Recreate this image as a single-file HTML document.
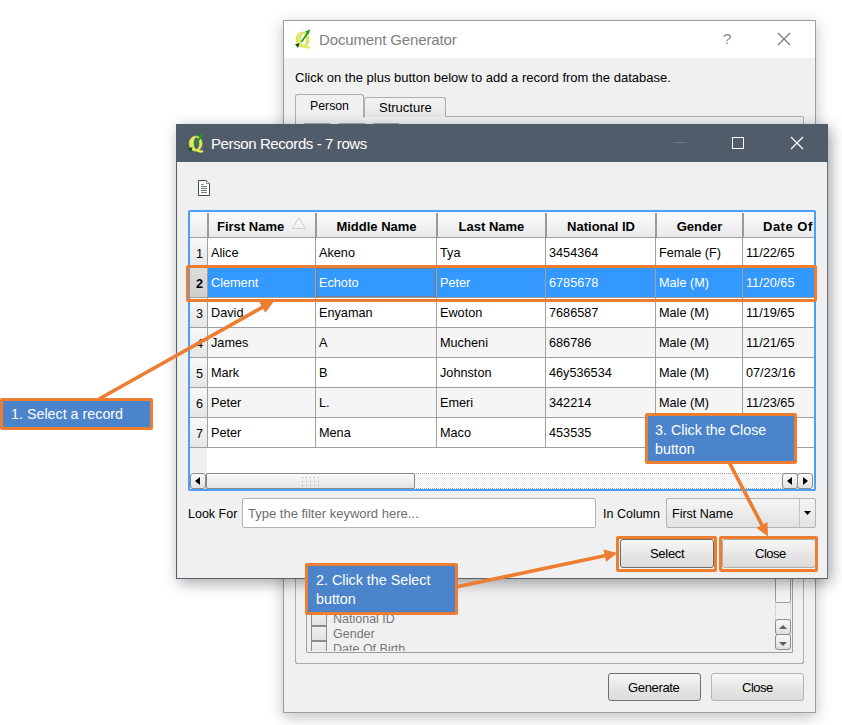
<!DOCTYPE html><html><head><meta charset="utf-8"><style>
*{box-sizing:border-box;margin:0;padding:0}
html,body{width:842px;height:725px;overflow:hidden;background:#fff;font-family:"Liberation Sans",sans-serif;position:relative}
div,span{position:absolute}
.t{white-space:nowrap;line-height:1}
.btn{border:1px solid #8a8a8a;border-radius:3px;background:linear-gradient(#f7f7f7,#e4e4e4 60%,#dcdcdc);}
.ann{background:#4b84ca;border:3px solid #ed7d31;border-radius:2px}
.anntx{color:#fff;font-size:14.3px;line-height:19px;white-space:nowrap}
.orect{border:3px solid #ed7d31;border-radius:2px}
</style></head><body>
<div style="left:283px;top:20px;width:533px;height:693px;border:1px solid #9c9c9c;background:#f0f0f0;box-shadow:0 4px 14px rgba(0,0,0,0.25)"></div>
<div style="left:284px;top:21px;width:531px;height:37px;background:#fff"></div>
<svg style="position:absolute;left:294px;top:28px" width="18" height="22" viewBox="0 0 18 22"><path fill-rule="evenodd" fill="#e2ec62" stroke="#c4cf3e" stroke-width="0.6" d="M2.1 11.6 a6.55 7.6 0 1 0 13.1 0 a6.55 7.6 0 1 0 -13.1 0 Z M6.6 11.3 a2.9 6.1 0 1 0 5.8 0 a2.9 6.1 0 1 0 -5.8 0 Z"/><path d="M9.5 17.5 Q12 20.5 16 19" fill="none" stroke="#e2ec62" stroke-width="2.4"/><path d="M7.6 13.8 L13.8 4.8" stroke="#1f9a1f" stroke-width="1.8"/><path d="M16.2 1.2 L11.2 3.6 L14.6 6.4 Z" fill="#1c9a1c"/><path d="M1 16.6 L5.6 15 L4 20 Z" fill="#15501a"/></svg>
<span class="t" style="left:319px;top:32px;font-size:15px;letter-spacing:-0.14px;color:#808080">Document Generator</span>
<span class="t" style="left:723px;top:31px;font-size:15px;color:#8a8a8a">?</span>
<svg style="position:absolute;left:777px;top:32px" width="14" height="14"><path d="M1 1L13 13M13 1L1 13" stroke="#777" stroke-width="1.2"/></svg>
<span class="t" style="left:295px;top:71px;font-size:13px;color:#000">Click on the plus button below to add a record from the database.</span>
<div style="left:295px;top:116px;width:509px;height:548px;border:1px solid #adadad;border-radius:2px;background:#f0f0f0"></div>
<div style="left:364px;top:97px;width:82px;height:20px;border:1px solid #adadad;border-bottom:none;border-radius:3px 3px 0 0;background:linear-gradient(#f4f4f4,#e6e6e6)"></div>
<div style="left:295px;top:94px;width:69px;height:24px;border:1px solid #adadad;border-bottom:none;border-radius:3px 3px 0 0;background:#f0f0f0"></div>
<span class="t" style="left:310px;top:100px;font-size:12.3px;color:#000">Person</span>
<span class="t" style="left:379px;top:101px;font-size:13px;color:#000">Structure</span>
<div style="left:303px;top:123px;width:28px;height:6px;border:1px solid #a8a8a8;border-radius:2px;background:#e4e4e4"></div>
<div style="left:338px;top:123px;width:28px;height:6px;border:1px solid #a8a8a8;border-radius:2px;background:#e4e4e4"></div>
<div style="left:372px;top:123px;width:28px;height:6px;border:1px solid #a8a8a8;border-radius:2px;background:#e4e4e4"></div>
<div style="left:306px;top:560px;width:487px;height:93px;border:1px solid #9d9d9d;border-radius:2px;background:#f0f0f0"></div>
<div style="left:311px;top:596px;width:16px;height:15px;border:1px solid #8d8d8d;background:linear-gradient(#f0f0f0,#e2e2e2)"></div>
<span class="t" style="left:333px;top:598px;font-size:12.5px;color:#777">Structure</span>
<div style="left:311px;top:611px;width:16px;height:15px;border:1px solid #8d8d8d;background:linear-gradient(#f0f0f0,#e2e2e2)"></div>
<span class="t" style="left:333px;top:613px;font-size:12.5px;color:#777">National ID</span>
<div style="left:311px;top:626px;width:16px;height:15px;border:1px solid #8d8d8d;background:linear-gradient(#f0f0f0,#e2e2e2)"></div>
<span class="t" style="left:333px;top:628px;font-size:12.5px;color:#777">Gender</span>
<div style="left:311px;top:641px;width:16px;height:15px;border:1px solid #8d8d8d;background:linear-gradient(#f0f0f0,#e2e2e2)"></div>
<span class="t" style="left:333px;top:643px;font-size:12.5px;color:#777">Date Of Birth</span>
<div style="left:307px;top:651px;width:485px;height:13px;background:#f0f0f0"></div>
<div style="left:306px;top:651px;width:487px;height:2px;border:1px solid #9d9d9d;border-top:none;border-radius:0 0 2px 2px"></div>
<div style="left:295px;top:560px;width:509px;height:104px;border:1px solid #adadad;border-top:none;border-radius:0 0 3px 3px"></div>
<div style="left:775px;top:561px;width:16px;height:90px;background:#f0f0f0"></div>
<div style="left:775px;top:570px;width:16px;height:33px;border:1px solid #9a9a9a;border-radius:2px;background:#f4f4f4"></div>
<div style="left:775px;top:603px;width:16px;height:17px;border-left:1px dotted #bbb;border-right:1px dotted #bbb"></div>
<div style="left:775px;top:619px;width:16px;height:16px;border:1px solid #8c8c8c;border-radius:3px;background:linear-gradient(#f8f8f8,#e0e0e0)"></div>
<div style="left:775px;top:634px;width:16px;height:16px;border:1px solid #8c8c8c;border-radius:3px;background:linear-gradient(#f8f8f8,#e0e0e0)"></div>
<svg style="position:absolute;left:775px;top:619px" width="16" height="32"><path d="M4 10H12L8 6Z M4 23H12L8 27Z" fill="#606060"/></svg>
<div class="btn" style="left:608px;top:673px;width:93px;height:28px;border-color:#6f6f6f"></div>
<span class="t" style="left:628px;top:681px;font-size:13px;letter-spacing:-0.35px">Generate</span>
<div class="btn" style="left:711px;top:673px;width:93px;height:28px;border-color:#b4b4b4"></div>
<span class="t" style="left:742px;top:681px;font-size:13px;letter-spacing:-0.5px">Close</span>
<div style="left:176px;top:124px;width:652px;height:455px;border:1px solid;border-color:#515c6b #66707c #58626e #56606d;background:#f0f0f0;box-shadow:3px 4px 14px rgba(0,0,0,0.36)"></div>
<div style="left:176px;top:124px;width:652px;height:38px;background:#515c6b"></div>
<svg style="position:absolute;left:187px;top:132px" width="18" height="22" viewBox="0 0 18 22"><path fill-rule="evenodd" fill="#e2ec62" stroke="#c4cf3e" stroke-width="0.6" d="M2.1 11.6 a6.55 7.6 0 1 0 13.1 0 a6.55 7.6 0 1 0 -13.1 0 Z M6.6 11.3 a2.9 6.1 0 1 0 5.8 0 a2.9 6.1 0 1 0 -5.8 0 Z"/><path d="M9.5 17.5 Q12 20.5 16 19" fill="none" stroke="#e2ec62" stroke-width="2.4"/><path d="M7.6 13.8 L13.8 4.8" stroke="#1f9a1f" stroke-width="1.8"/><path d="M16.2 1.2 L11.2 3.6 L14.6 6.4 Z" fill="#1c9a1c"/><path d="M1 16.6 L5.6 15 L4 20 Z" fill="#15501a"/></svg>
<span class="t" style="left:211px;top:136px;font-size:15px;letter-spacing:-0.4px;color:#fff">Person Records - 7 rows</span>
<div style="left:674px;top:142px;width:12px;height:1px;background:#6d7682"></div>
<div style="left:732px;top:137px;width:12px;height:12px;border:1px solid #fff"></div>
<svg style="position:absolute;left:790px;top:136px" width="14" height="14"><path d="M1 1L13 13M13 1L1 13" stroke="#fff" stroke-width="1.3"/></svg>
<svg style="position:absolute;left:196px;top:178px" width="16" height="20"><path d="M2.5 2.5H10.5L13.5 5.5V17.5H2.5Z" fill="#fff" stroke="#3f4a55"/><path d="M10.5 2.5V5.5H13.5" fill="#e4e4e4" stroke="#8a9096"/><path d="M5 6.5H7.5M5 8.5H11M5 10.5H11M5 12.5H11M5 14.5H11" stroke="#6f7780"/></svg>
<div style="left:188px;top:210px;width:628px;height:281px;border:2px solid #4a9ffa;border-radius:2px;background:#fff"></div>
<div style="left:190px;top:212px;width:624px;height:277px;overflow:hidden">
<div style="left:0;top:0;width:624px;height:26px;background:linear-gradient(#fbfbfb,#e9e9e9)"></div>
<div style="left:0;top:25px;width:624px;height:1px;background:#a0a0a0"></div>
<div style="left:0;top:26px;width:17px;height:250px;background:#f0f0f0"></div>
<div style="left:17px;top:1px;width:2px;height:25px;background:#9a9a9a"></div>
<div style="left:125px;top:1px;width:2px;height:25px;background:#9a9a9a"></div>
<div style="left:246px;top:1px;width:2px;height:25px;background:#9a9a9a"></div>
<div style="left:355px;top:1px;width:2px;height:25px;background:#9a9a9a"></div>
<div style="left:465px;top:1px;width:2px;height:25px;background:#9a9a9a"></div>
<div style="left:552px;top:1px;width:2px;height:25px;background:#9a9a9a"></div>
<span class="t" style="left:27px;top:8px;font-size:13px;font-weight:bold;color:#000">First Name</span>
<svg style="position:absolute;left:101px;top:4px" width="16" height="14"><path d="M1.5 12.5 L8 1.5 L14.5 12.5 Z" fill="none" stroke="#cfcfcf"/></svg>
<span class="t" style="left:146.4px;top:8px;font-size:13px;font-weight:bold;color:#000">Middle Name</span>
<span class="t" style="left:268.6px;top:8px;font-size:13px;font-weight:bold;color:#000">Last Name</span>
<span class="t" style="left:377.1px;top:8px;font-size:13px;font-weight:bold;color:#000">National ID</span>
<span class="t" style="left:486.7px;top:8px;font-size:13px;font-weight:bold;color:#000">Gender</span>
<span class="t" style="left:573px;top:8px;font-size:13px;font-weight:bold;color:#000;letter-spacing:0.5px">Date Of</span>
<div style="left:18px;top:26px;width:606px;height:29px;background:#ffffff"></div>
<div style="left:0;top:26px;width:17px;height:29px;background:linear-gradient(#f8f8f8,#e6e6e6)"></div>
<span class="t" style="left:6px;top:36px;font-size:12.7px;color:#000;">1</span>
<div style="left:0;top:55px;width:624px;height:1px;background:#a0a0a0"></div>
<span class="t" style="left:21px;top:35px;font-size:12.7px;color:#000">Alice</span>
<span class="t" style="left:129px;top:35px;font-size:12.7px;color:#000">Akeno</span>
<span class="t" style="left:250px;top:35px;font-size:12.7px;color:#000">Tya</span>
<span class="t" style="left:359px;top:35px;font-size:12.7px;color:#000">3454364</span>
<span class="t" style="left:469px;top:35px;font-size:12.7px;color:#000">Female (F)</span>
<span class="t" style="left:556px;top:35px;font-size:12.7px;color:#000">11/22/65</span>
<div style="left:18px;top:56px;width:606px;height:29px;background:#3399ff"></div>
<div style="left:0;top:56px;width:17px;height:29px;background:linear-gradient(#dcdcdc,#cfcfcf)"></div>
<span class="t" style="left:6px;top:66px;font-size:12.7px;color:#000;font-weight:bold">2</span>
<div style="left:0;top:85px;width:624px;height:1px;background:#a0a0a0"></div>
<span class="t" style="left:21px;top:65px;font-size:12.7px;color:#fff">Clement</span>
<span class="t" style="left:129px;top:65px;font-size:12.7px;color:#fff">Echoto</span>
<span class="t" style="left:250px;top:65px;font-size:12.7px;color:#fff">Peter</span>
<span class="t" style="left:359px;top:65px;font-size:12.7px;color:#fff">6785678</span>
<span class="t" style="left:469px;top:65px;font-size:12.7px;color:#fff">Male (M)</span>
<span class="t" style="left:556px;top:65px;font-size:12.7px;color:#fff">11/20/65</span>
<div style="left:18px;top:86px;width:606px;height:29px;background:#ffffff"></div>
<div style="left:0;top:86px;width:17px;height:29px;background:linear-gradient(#f8f8f8,#e6e6e6)"></div>
<span class="t" style="left:6px;top:96px;font-size:12.7px;color:#000;">3</span>
<div style="left:0;top:115px;width:624px;height:1px;background:#a0a0a0"></div>
<span class="t" style="left:21px;top:95px;font-size:12.7px;color:#000">David</span>
<span class="t" style="left:129px;top:95px;font-size:12.7px;color:#000">Enyaman</span>
<span class="t" style="left:250px;top:95px;font-size:12.7px;color:#000">Ewoton</span>
<span class="t" style="left:359px;top:95px;font-size:12.7px;color:#000">7686587</span>
<span class="t" style="left:469px;top:95px;font-size:12.7px;color:#000">Male (M)</span>
<span class="t" style="left:556px;top:95px;font-size:12.7px;color:#000">11/19/65</span>
<div style="left:18px;top:116px;width:606px;height:29px;background:#f5f5f5"></div>
<div style="left:0;top:116px;width:17px;height:29px;background:linear-gradient(#f8f8f8,#e6e6e6)"></div>
<span class="t" style="left:6px;top:126px;font-size:12.7px;color:#000;">4</span>
<div style="left:0;top:145px;width:624px;height:1px;background:#a0a0a0"></div>
<span class="t" style="left:21px;top:125px;font-size:12.7px;color:#000">James</span>
<span class="t" style="left:129px;top:125px;font-size:12.7px;color:#000">A</span>
<span class="t" style="left:250px;top:125px;font-size:12.7px;color:#000">Mucheni</span>
<span class="t" style="left:359px;top:125px;font-size:12.7px;color:#000">686786</span>
<span class="t" style="left:469px;top:125px;font-size:12.7px;color:#000">Male (M)</span>
<span class="t" style="left:556px;top:125px;font-size:12.7px;color:#000">11/21/65</span>
<div style="left:18px;top:146px;width:606px;height:29px;background:#ffffff"></div>
<div style="left:0;top:146px;width:17px;height:29px;background:linear-gradient(#f8f8f8,#e6e6e6)"></div>
<span class="t" style="left:6px;top:156px;font-size:12.7px;color:#000;">5</span>
<div style="left:0;top:175px;width:624px;height:1px;background:#a0a0a0"></div>
<span class="t" style="left:21px;top:155px;font-size:12.7px;color:#000">Mark</span>
<span class="t" style="left:129px;top:155px;font-size:12.7px;color:#000">B</span>
<span class="t" style="left:250px;top:155px;font-size:12.7px;color:#000">Johnston</span>
<span class="t" style="left:359px;top:155px;font-size:12.7px;color:#000">46y536534</span>
<span class="t" style="left:469px;top:155px;font-size:12.7px;color:#000">Male (M)</span>
<span class="t" style="left:556px;top:155px;font-size:12.7px;color:#000">07/23/16</span>
<div style="left:18px;top:176px;width:606px;height:29px;background:#f5f5f5"></div>
<div style="left:0;top:176px;width:17px;height:29px;background:linear-gradient(#f8f8f8,#e6e6e6)"></div>
<span class="t" style="left:6px;top:186px;font-size:12.7px;color:#000;">6</span>
<div style="left:0;top:205px;width:624px;height:1px;background:#a0a0a0"></div>
<span class="t" style="left:21px;top:185px;font-size:12.7px;color:#000">Peter</span>
<span class="t" style="left:129px;top:185px;font-size:12.7px;color:#000">L.</span>
<span class="t" style="left:250px;top:185px;font-size:12.7px;color:#000">Emeri</span>
<span class="t" style="left:359px;top:185px;font-size:12.7px;color:#000">342214</span>
<span class="t" style="left:469px;top:185px;font-size:12.7px;color:#000">Male (M)</span>
<span class="t" style="left:556px;top:185px;font-size:12.7px;color:#000">11/23/65</span>
<div style="left:18px;top:206px;width:606px;height:29px;background:#ffffff"></div>
<div style="left:0;top:206px;width:17px;height:29px;background:linear-gradient(#f8f8f8,#e6e6e6)"></div>
<span class="t" style="left:6px;top:216px;font-size:12.7px;color:#000;">7</span>
<div style="left:0;top:235px;width:624px;height:1px;background:#a0a0a0"></div>
<span class="t" style="left:21px;top:215px;font-size:12.7px;color:#000">Peter</span>
<span class="t" style="left:129px;top:215px;font-size:12.7px;color:#000">Mena</span>
<span class="t" style="left:250px;top:215px;font-size:12.7px;color:#000">Maco</span>
<span class="t" style="left:359px;top:215px;font-size:12.7px;color:#000">453535</span>
<span class="t" style="left:469px;top:215px;font-size:12.7px;color:#000">Male (M)</span>
<span class="t" style="left:556px;top:215px;font-size:12.7px;color:#000">11/23/65</span>
<div style="left:17px;top:26px;width:1px;height:210px;background:#a0a0a0"></div>
<div style="left:125px;top:26px;width:1px;height:210px;background:#a0a0a0"></div>
<div style="left:246px;top:26px;width:1px;height:210px;background:#a0a0a0"></div>
<div style="left:355px;top:26px;width:1px;height:210px;background:#a0a0a0"></div>
<div style="left:465px;top:26px;width:1px;height:210px;background:#a0a0a0"></div>
<div style="left:552px;top:26px;width:1px;height:210px;background:#a0a0a0"></div>
<div style="left:126px;top:56px;width:120px;height:29px;border:1px dotted #b0602a"></div>
<div style="left:0;top:261px;width:624px;height:16px;background:#fff"></div>
<div style="left:16px;top:261px;width:596px;height:16px;background-image:conic-gradient(#eeeeee 25%,#ffffff 0 50%,#eeeeee 0 75%,#ffffff 0);background-size:2px 2px"></div>
<div style="left:16px;top:261px;width:596px;height:1px;background-image:repeating-linear-gradient(90deg,#a8a8a8 0 1px,transparent 1px 2px)"></div>
<div style="left:16px;top:276px;width:596px;height:1px;background-image:repeating-linear-gradient(90deg,#a8a8a8 0 1px,transparent 1px 2px)"></div>
<div style="left:0;top:261px;width:16px;height:16px;border:1px solid #8a8a8a;border-radius:3px;background:linear-gradient(#fafafa,#e2e2e2)"></div>
<svg style="position:absolute;left:0;top:261px" width="16" height="16"><path d="M5 8L10 4V12Z" fill="#000"/></svg>
<div style="left:16px;top:261px;width:209px;height:16px;border:1px solid #8a8a8a;border-radius:2px;background:linear-gradient(#fafafa,#e4e4e4)"></div>
<svg style="position:absolute;left:111px;top:264px" width="20" height="10"><g fill="#aaa"><rect x="1" y="1" width="1" height="1"/><rect x="1" y="5" width="1" height="1"/><rect x="1" y="9" width="1" height="1"/><rect x="5" y="1" width="1" height="1"/><rect x="5" y="5" width="1" height="1"/><rect x="5" y="9" width="1" height="1"/><rect x="9" y="1" width="1" height="1"/><rect x="9" y="5" width="1" height="1"/><rect x="9" y="9" width="1" height="1"/><rect x="13" y="1" width="1" height="1"/><rect x="13" y="5" width="1" height="1"/><rect x="13" y="9" width="1" height="1"/><rect x="17" y="1" width="1" height="1"/><rect x="17" y="5" width="1" height="1"/><rect x="17" y="9" width="1" height="1"/></g></svg>
<div style="left:592px;top:261px;width:16px;height:16px;border:1px solid #8a8a8a;border-radius:3px;background:linear-gradient(#fafafa,#e2e2e2)"></div>
<div style="left:607px;top:261px;width:16px;height:16px;border:1px solid #8a8a8a;border-radius:3px;background:linear-gradient(#fafafa,#e2e2e2)"></div>
<svg style="position:absolute;left:592px;top:261px" width="32" height="16"><path d="M5 8L10 4V12Z M26 8L21 4V12Z" fill="#000"/></svg>
</div>
<span class="t" style="left:188px;top:508px;font-size:12.5px;color:#000">Look For</span>
<div style="left:242px;top:498px;width:354px;height:30px;border:1px solid #b3b3b3;border-radius:2px;background:#fff"></div>
<span class="t" style="left:248px;top:507px;font-size:13px;color:#6e6e6e">Type the filter keyword here...</span>
<span class="t" style="left:603px;top:508px;font-size:12.5px;color:#000">In Column</span>
<div style="left:666px;top:498px;width:150px;height:30px;border:1px solid #b3b3b3;border-radius:2px;background:linear-gradient(#f4f4f4,#e3e3e3)"></div>
<div style="left:799px;top:499px;width:1px;height:28px;background:#c4c4c4"></div>
<svg style="position:absolute;left:801px;top:499px" width="14" height="28"><path d="M3 12H10L6.5 16Z" fill="#000"/></svg>
<span class="t" style="left:672px;top:508px;font-size:12.5px;color:#000">First Name</span>
<div class="btn" style="left:620px;top:539px;width:94px;height:29px;border-color:#6a6a6a"></div>
<span class="t" style="left:650px;top:547px;font-size:13px;letter-spacing:-0.3px">Select</span>
<div class="btn" style="left:722px;top:539px;width:94px;height:29px;border-color:#adadad"></div>
<span class="t" style="left:755px;top:547px;font-size:13px;letter-spacing:-0.5px">Close</span>
<div class="orect" style="left:186px;top:265px;width:631px;height:37px"></div>
<div class="orect" style="left:616px;top:536px;width:101px;height:36px"></div>
<div class="orect" style="left:719px;top:536px;width:99px;height:36px"></div>
<svg style="position:absolute;left:0;top:0" width="842" height="725">
<line x1="99.0" y1="399.0" x2="263.2" y2="306.9" stroke="#ed7d31" stroke-width="3.6"/><polygon points="274.5,300.5 265.3,312.8 259.3,301.9" fill="#ed7d31"/>
<line x1="456.0" y1="587.0" x2="605.8" y2="555.5" stroke="#ed7d31" stroke-width="3.6"/><polygon points="617.5,553.0 606.1,561.7 603.5,549.6" fill="#ed7d31"/>
<line x1="729.0" y1="462.0" x2="762.4" y2="525.9" stroke="#ed7d31" stroke-width="3.6"/><polygon points="768.0,536.5 756.5,527.9 767.5,522.1" fill="#ed7d31"/>
</svg>
<div class="ann" style="left:0px;top:398px;width:153px;height:32px"></div>
<span class="t anntx" style="left:11px;top:405px">1. Select a record</span>
<div class="ann" style="left:305px;top:563px;width:153px;height:52px"></div>
<span class="t anntx" style="left:316px;top:571px;white-space:normal;width:130px">2. Click the Select button</span>
<div class="ann" style="left:645px;top:413px;width:152px;height:51px"></div>
<span class="t anntx" style="left:655px;top:421px;white-space:normal;width:130px">3. Click the Close button</span>
</body></html>
